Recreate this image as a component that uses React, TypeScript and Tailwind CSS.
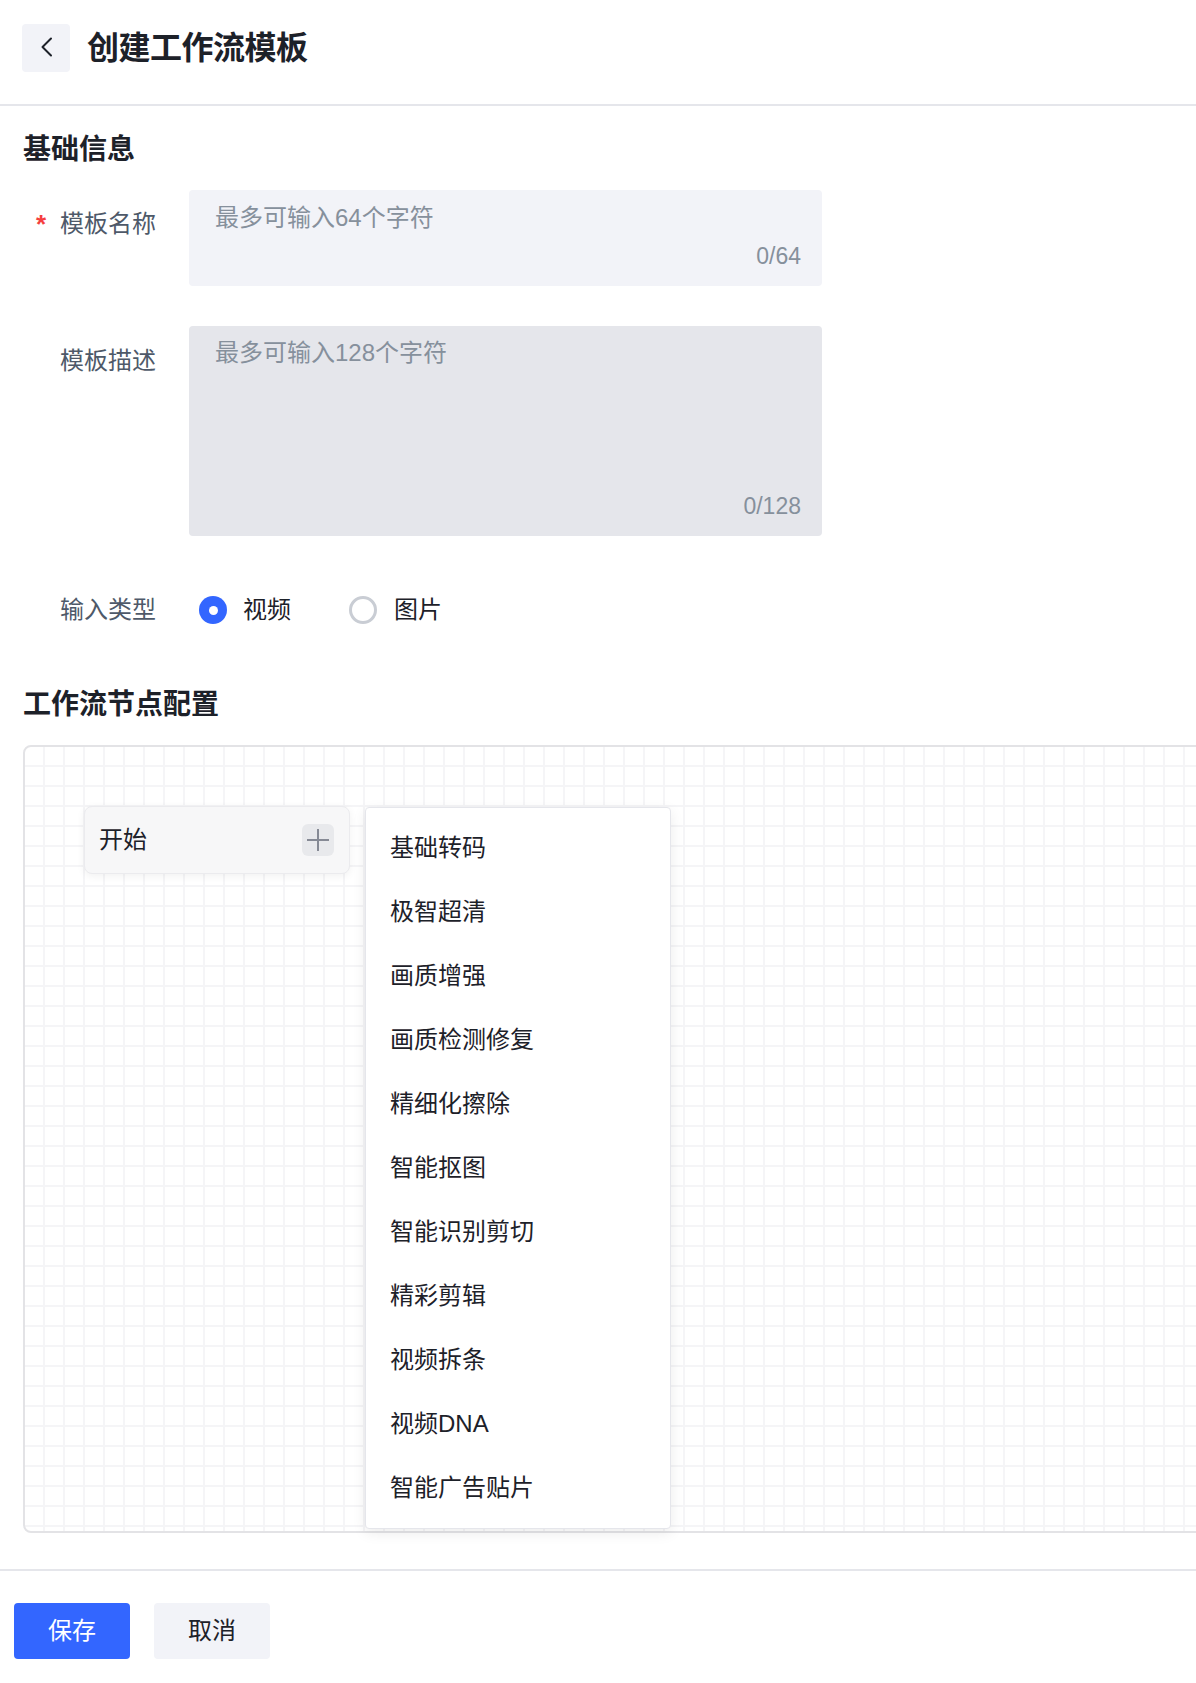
import React from "react";

const menuItems = [
  "基础转码",
  "极智超清",
  "画质增强",
  "画质检测修复",
  "精细化擦除",
  "智能抠图",
  "智能识别剪切",
  "精彩剪辑",
  "视频拆条",
  "视频DNA",
  "智能广告贴片",
];

export default function App() {
  return (
    <div className="w-[1196px] h-[1683px] overflow-hidden bg-white text-[#1d2129] font-['Liberation_Sans','Noto_Sans_CJK_SC',sans-serif]">
      {/* Header */}
      <div className="flex items-center pt-6 pb-8 pl-[22px] border-b-2 border-[#e5e6eb]">
        <button className="w-12 h-12 rounded-[4px] bg-[#f2f3f8] flex items-center justify-center">
          <svg width="48" height="48" viewBox="0 0 48 48" fill="none">
            <polyline
              points="29,14.5 20.5,23 29,31.5"
              stroke="#1d2129"
              strokeWidth="2"
              strokeLinecap="round"
              strokeLinejoin="round"
            />
          </svg>
        </button>
        <h1 className="ml-[17px] text-[32px] leading-[44px] font-bold tracking-[-0.5px]">创建工作流模板</h1>
      </div>

      {/* Basic info */}
      <div className="pl-[23px] mt-[24px] text-[28px] leading-[40px] font-semibold">基础信息</div>

      <div className="flex mt-[20px]">
        <div className="w-[189px] flex justify-end pr-[33px] pt-[18px]">
          <div className="flex items-start leading-[32px] text-[24px]">
            <span className="text-[#f53f3f] font-bold text-[26px] mr-[14px]">*</span>
            <span className="text-[#4e5969]">模板名称</span>
          </div>
        </div>
        <div className="relative w-[633px] h-[96px] rounded-[4px] bg-[#f2f3f8]">
          <div className="absolute left-[26px] top-[12px] text-[24px] leading-[32px] text-[#86909c]">最多可输入64个字符</div>
          <div className="absolute right-[21px] bottom-[14px] text-[23px] leading-[32px] text-[#86909c]">0/64</div>
        </div>
      </div>

      <div className="flex mt-[40px]">
        <div className="w-[189px] flex justify-end pr-[33px] pt-[19px]">
          <span className="text-[24px] leading-[32px] text-[#4e5969]">模板描述</span>
        </div>
        <div className="relative w-[633px] h-[210px] rounded-[4px] bg-[#e5e6eb]">
          <div className="absolute left-[26px] top-[11px] text-[24px] leading-[32px] text-[#86909c]">最多可输入128个字符</div>
          <div className="absolute right-[21px] bottom-[14px] text-[23px] leading-[32px] text-[#86909c]">0/128</div>
        </div>
      </div>

      <div className="flex items-center mt-[58px] h-8">
        <div className="w-[189px] flex justify-end pr-[33px]">
          <span className="text-[24px] leading-[32px] text-[#4e5969]">输入类型</span>
        </div>
        <div className="flex items-center ml-[10px]">
          <span className="w-7 h-7 rounded-full bg-[#3366ff] flex items-center justify-center">
            <span className="w-[9px] h-[9px] rounded-full bg-white" />
          </span>
          <span className="ml-[16px] text-[24px] leading-[32px]">视频</span>
        </div>
        <div className="flex items-center ml-[58px]">
          <span className="w-7 h-7 rounded-full border-[3px] border-[#c9cdd4] bg-white" />
          <span className="ml-[17px] text-[24px] leading-[32px]">图片</span>
        </div>
      </div>

      {/* Workflow config */}
      <div className="pl-[23px] mt-[59px] text-[28px] leading-[40px] font-semibold">工作流节点配置</div>

      <div className="ml-[23px] mt-[20px] w-[1220px] h-[788px] rounded-lg border-2 border-[#e3e3e6] relative bg-white bg-[linear-gradient(to_right,transparent_18px,#f5f5f7_18px),linear-gradient(to_bottom,transparent_18px,#f5f5f7_18px)] bg-size-[20px_20px]">
        {/* Start node */}
        <div className="absolute left-[59px] top-[59px] w-[266px] h-[68px] rounded-lg bg-[#f7f7f8] border border-[#ebebee] shadow-[0_2px_8px_rgba(0,0,0,0.06)] flex items-center justify-between pl-[14px] pr-[15px]">
          <span className="text-[24px] leading-[32px]">开始</span>
          <span className="w-8 h-8 rounded-md bg-[#e8e9ec] flex items-center justify-center">
            <svg width="24" height="24" viewBox="0 0 24 24" fill="none">
              <path d="M12 1v22M1 12h22" stroke="#868a95" strokeWidth="2" />
            </svg>
          </span>
        </div>

        {/* Dropdown menu */}
        <div className="absolute left-[340px] top-[60px] w-[306px] rounded-[4px] bg-white border border-[#e5e6eb] shadow-[0_4px_14px_rgba(0,0,0,0.08)] py-2">
          {menuItems.map((item) => (
            <div key={item} className="h-16 flex items-center pl-6 text-[24px] leading-[32px] text-[#1d2129]">
              {item}
            </div>
          ))}
        </div>
      </div>

      {/* Footer */}
      <div className="mt-[36px] border-t-2 border-[#e5e6eb] pt-8 pl-[14px] flex gap-6">
        <button className="w-[116px] h-[56px] rounded-[4px] bg-[#3366ff] text-white text-[24px] leading-[32px]">保存</button>
        <button className="w-[116px] h-[56px] rounded-[4px] bg-[#f2f3f8] text-[#1d2129] text-[24px] leading-[32px]">取消</button>
      </div>
    </div>
  );
}
